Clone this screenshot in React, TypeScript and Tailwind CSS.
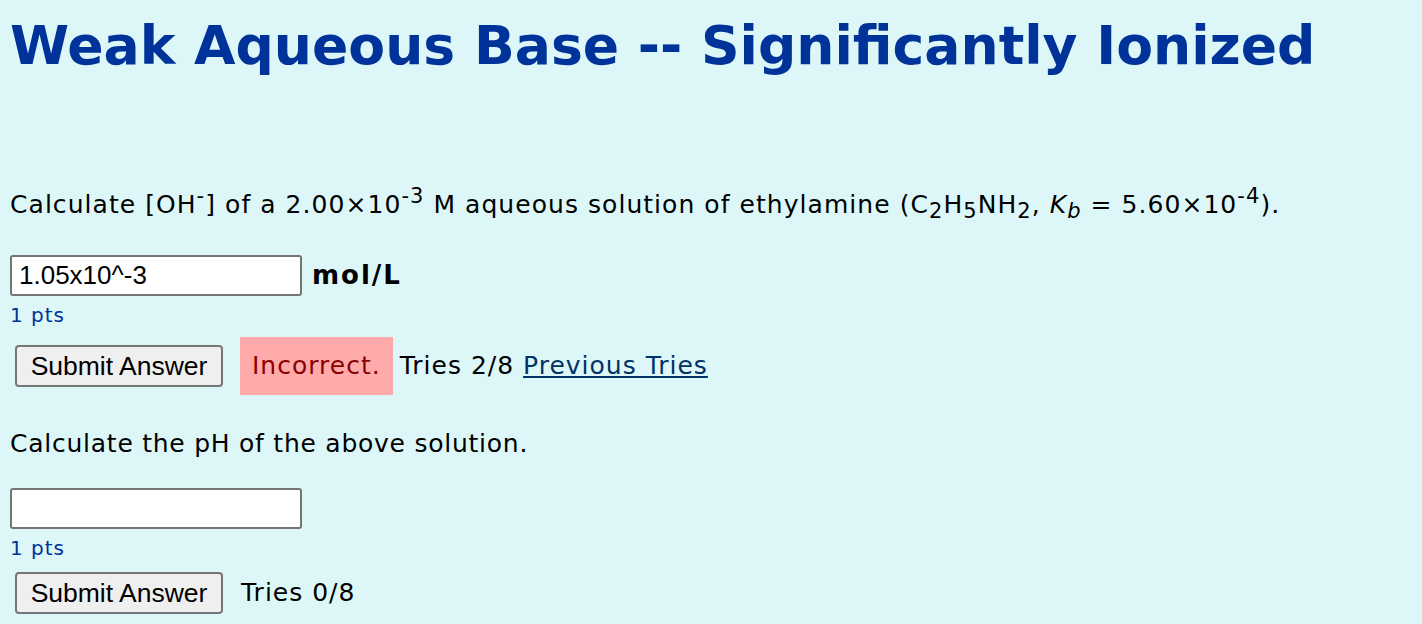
import React from "react";

const V = { fontFamily: '"DejaVu Sans", Verdana, sans-serif' };
const A = { fontFamily: '"Liberation Sans", Arial, sans-serif' };

export default function App() {
  return (
    <div className="min-h-[624px] w-full bg-[#ddf7f8] px-[10px] text-black" style={V}>
      <h1 className="pt-[14px] text-[53.6px] font-bold leading-[64px] text-[#003399]">
        Weak Aqueous Base -- Significantly Ionized
      </h1>
      <p className="mt-[112px] text-[25px] leading-[30px] tracking-[1.05px]">
        Calculate [OH<sup className="text-[21px]">-</sup>] of a 2.00×10<sup className="text-[21px]">-3</sup> M aqueous solution of ethylamine (C<sub className="text-[21px]">2</sub>H<sub className="text-[21px]">5</sub>NH<sub className="text-[21px]">2</sub>, <i>K<sub className="text-[21px]">b</sub></i> = 5.60×10<sup className="text-[21px]">-4</sup>).
      </p>
      <div className="mt-[35px] flex items-center gap-[10px]">
        <input
          readOnly
          value="1.05x10^-3"
          className="h-[41px] w-[292px] rounded-[3px] border-2 border-[#767676] bg-white px-[7px] text-[26px] text-black"
          style={A}
        />
        <span className="text-[26px] font-bold tracking-[2px]">mol/L</span>
      </div>
      <div className="mt-[7px] text-[20px] leading-[24px] tracking-[1px] text-[#003399]">1 pts</div>
      <div className="mt-[10px] flex items-center">
        <button
          className="ml-[5px] h-[42px] w-[208px] rounded-[4px] border-2 border-[#767676] bg-[#efefef] text-[26.5px] leading-none"
          style={A}
        >
          Submit Answer
        </button>
        <span className="ml-[17px] bg-[#ffaaaa] px-[12px] py-[14px] text-[25px] leading-[30px] tracking-[1px] text-[#8b0000]">Incorrect.</span>
        <span className="ml-[7px] text-[25px] tracking-[1px]">Tries 2/8 <a className="text-[#003366] underline">Previous Tries</a></span>
      </div>
      <p className="mt-[34px] text-[25px] leading-[30px] tracking-[0.75px]">Calculate the pH of the above solution.</p>
      <div className="mt-[29px]">
        <input
          readOnly
          className="h-[41px] w-[292px] rounded-[3px] border-2 border-[#767676] bg-white px-[8px] text-[26px]"
          style={A}
        />
      </div>
      <div className="mt-[7px] text-[20px] leading-[24px] tracking-[1px] text-[#003399]">1 pts</div>
      <div className="mt-[12px] flex items-center">
        <button
          className="ml-[5px] h-[42px] w-[208px] rounded-[4px] border-2 border-[#767676] bg-[#efefef] text-[26.5px] leading-none"
          style={A}
        >
          Submit Answer
        </button>
        <span className="ml-[18px] text-[25px] tracking-[1px]">Tries 0/8</span>
      </div>
    </div>
  );
}
